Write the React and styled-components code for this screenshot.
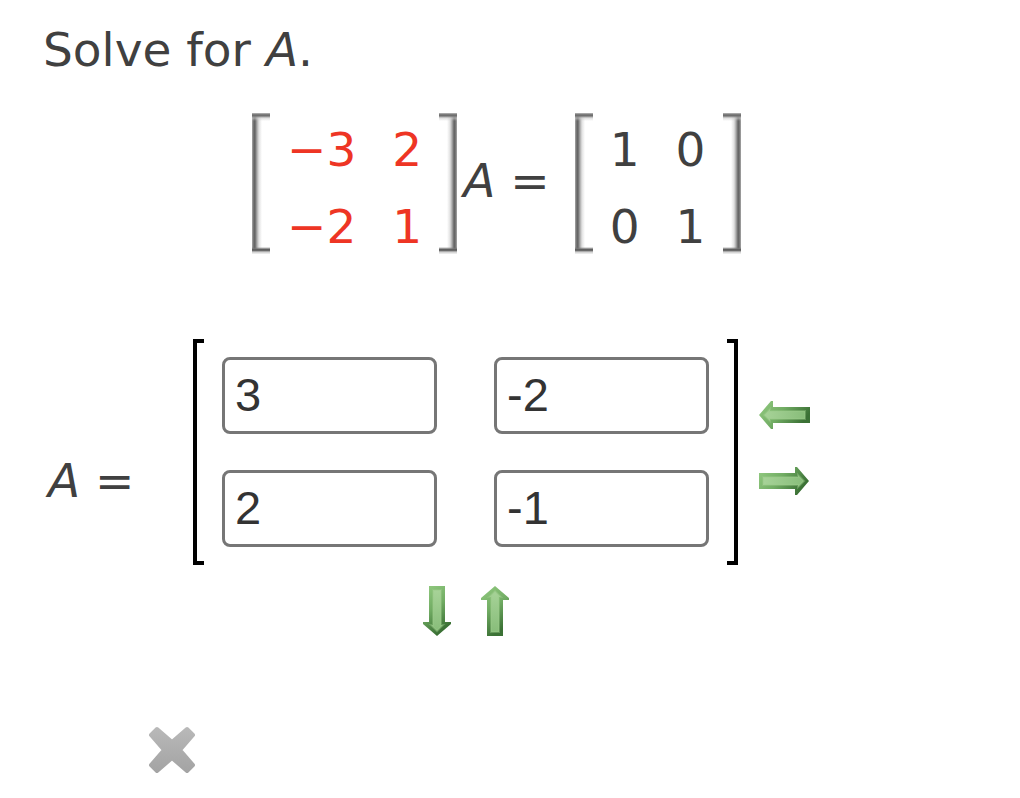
import React, { useState } from 'react'
import styled, { createGlobalStyle } from 'styled-components'

const GlobalStyle = createGlobalStyle`
  *, *::before, *::after { box-sizing: border-box; }
  body {
    margin: 0;
    background: #fff;
    color: #404040;
    font-family: Verdana, 'DejaVu Sans', sans-serif;
    font-size: 47px;
    line-height: 60px;
  }
`

const Question = styled.main`
  padding: 20px 43px;
`

const Prompt = styled.p`
  margin: 0;
`

const Equation = styled.div`
  display: flex;
  align-items: center;
  margin-top: 33px;
  padding-left: 209px;
`

const Matrix = styled.div`
  display: flex;
  color: ${props => props.$color || 'inherit'};
`

const upright = side => `linear-gradient(to ${side}, #a8a8a8, #666 2px, #666 3px, #aaa 5px, #e2e2e2 7px, rgba(255, 255, 255, 0) 10px)`

const SoftBracket = styled.span`
  width: 18px;
  height: 141px;
  background:
    linear-gradient(#bbb, #666 2px, #777 3px, rgba(200, 200, 200, 0.6) 5px, rgba(255, 255, 255, 0) 8px) left top / 100% 8px no-repeat,
    linear-gradient(to top, #f4f4f4, #ccc 2px, #484848 4px, #777 5px, rgba(255, 255, 255, 0) 7px) left bottom / 100% 7px no-repeat,
    ${props => upright(props.$side === 'left' ? 'right' : 'left')} ${props => props.$side} top / 10px 100% no-repeat;
`

const Values = styled.table`
  margin: 0 17px;
  border-collapse: collapse;

  td {
    height: 77px;
    padding: 7px 0 0;
    text-align: center;
    vertical-align: top;
  }

  td + td {
    padding-left: 36px;
  }

  tr:last-child td {
    height: 64px;
  }
`

const Operator = styled.span`
  margin: 0 25px 0 6px;
  padding-bottom: 8px;
`

const Answer = styled.form`
  display: grid;
  grid-template-columns: 150px 545px auto;
  justify-content: start;
  align-items: center;
  margin-top: 82px;
`

const Variable = styled.span`
  padding: 58px 0 0 5px;
`

const Fields = styled.div`
  display: grid;
  grid-template-columns: 1fr 1fr;
  gap: 36px 57px;
  padding: 18px 29px;
  background:
    linear-gradient(#000, #000) left top / 4px 100%,
    linear-gradient(#000, #000) left top / 11px 4px,
    linear-gradient(#000, #000) left bottom / 11px 4px,
    linear-gradient(#000, #000) right top / 4px 100%,
    linear-gradient(#000, #000) right top / 11px 4px,
    linear-gradient(#000, #000) right bottom / 11px 4px;
  background-repeat: no-repeat;
`

const Field = styled.input`
  width: 100%;
  min-width: 0;
  height: 77px;
  padding: 0 10px 2px;
  border: 3px solid #767676;
  border-radius: 8px;
  background: #fff;
  color: #333;
  font: 47px/60px Arial, 'Liberation Sans', sans-serif;
`

const Controls = styled.div`
  display: flex;
  flex-direction: ${props => (props.$row ? 'row' : 'column')};
  gap: ${props => (props.$row ? '28px' : '36px')};
  ${props => props.$row ? 'grid-column: 2; justify-content: center; padding: 20px 0 0;' : 'padding: 0 0 8px 20px;'}
`

const ArrowButton = styled.button`
  display: block;
  padding: 0;
  border: 0;
  background: none;
  cursor: pointer;

  svg { display: block; }
`

const Result = styled.div`
  margin: 88px 0 0 104px;

  svg { display: block; }
`

const shapes = {
  left: 'M1 15 L13 1 H15 V7 H52 V23 H15 V29 H13 Z',
  right: 'M51 15 L39 1 H37 V7 H1 V23 H37 V29 H39 Z',
  down: 'M15 51 L1 39 V37 H7 V1 H23 V37 H29 V39 Z',
  up: 'M15 1 L1 13 V15 H7 V51 H23 V15 H29 V13 Z',
}

const insides = {
  left: 'M6 15 L12 9 V11 H47 V19 H12 V21 Z',
  right: 'M46 15 L40 9 V11 H5 V19 H40 V21 Z',
  down: 'M15 46 L9 40 H11 V5 H19 V40 H21 Z',
  up: 'M15 6 L9 12 H11 V47 H19 V12 H21 Z',
}

const Arrow = ({ id, dir, label }) => {
  const wide = dir === 'left' || dir === 'right'

  return (
    <ArrowButton type="button" aria-label={label}>
      <svg width={wide ? 52 : 30} height={wide ? 30 : 52}>
        <defs>
          <linearGradient id={id} x1="0" y1="0" x2={wide ? '1' : '0.4'} y2={wide ? '0.4' : '1'}>
            <stop offset="0" stopColor="#94cc82" />
            <stop offset="0.5" stopColor="#72ad64" />
            <stop offset="1" stopColor="#3b7135" />
          </linearGradient>
          <linearGradient id={id + '-in'} x1="0" y1="0" x2={wide ? '1' : '0'} y2={wide ? '0' : '1'}>
            <stop offset="0" stopColor="#a7d398" />
            <stop offset="1" stopColor="#88bd7a" />
          </linearGradient>
        </defs>
        <path d={shapes[dir]} fill={`url(#${id})`} />
        <path d={insides[dir]} fill={`url(#${id}-in)`} stroke="#9acb8a" strokeOpacity="0.4" strokeWidth="2" />
      </svg>
    </ArrowButton>
  )
}

const KnownMatrix = ({ rows, color }) => (
  <Matrix $color={color}>
    <SoftBracket $side="left" />
    <Values>
      <tbody>
        {rows.map((row, i) => (
          <tr key={i}>{row.map((value, j) => <td key={j}>{value}</td>)}</tr>
        ))}
      </tbody>
    </Values>
    <SoftBracket $side="right" />
  </Matrix>
)

const App = () => {
  const [entries, setEntries] = useState(['3', '-2', '2', '-1'])

  const update = (index, value) => {
    setEntries(entries.map((entry, i) => (i === index ? value : entry)))
  }

  return (
    <Question>
      <GlobalStyle />
      <Prompt>Solve for <i>A</i>.</Prompt>

      <Equation>
        <KnownMatrix color="#ee3524" rows={[['−3', '2'], ['−2', '1']]} />
        <Operator><i>A</i> =</Operator>
        <KnownMatrix rows={[['1', '0'], ['0', '1']]} />
      </Equation>

      <Answer onSubmit={e => e.preventDefault()}>
        <Variable><i>A</i> =</Variable>
        <Fields>
          {entries.map((entry, i) => (
            <Field
              key={i}
              type="text"
              aria-label={`Row ${Math.floor(i / 2) + 1}, column ${(i % 2) + 1}`}
              value={entry}
              onChange={e => update(i, e.target.value)}
            />
          ))}
        </Fields>
        <Controls>
          <Arrow id="remove-column" dir="left" label="Remove column" />
          <Arrow id="add-column" dir="right" label="Add column" />
        </Controls>
        <Controls $row>
          <Arrow id="add-row" dir="down" label="Add row" />
          <Arrow id="remove-row" dir="up" label="Remove row" />
        </Controls>
      </Answer>

      <Result>
        <svg width="50" height="50" role="img" aria-label="Incorrect">
          <defs>
            <linearGradient id="cross" x1="0" y1="0" x2="0" y2="1">
              <stop offset="0" stopColor="#b8b8b8" />
              <stop offset="1" stopColor="#a4a4a4" />
            </linearGradient>
          </defs>
          <path
            d="M10 4 L25 17 L40 4 L46 10 L33 25 L46 40 L40 46 L25 33 L10 46 L4 40 L17 25 L4 10 Z"
            fill="url(#cross)"
            stroke="url(#cross)"
            strokeWidth="4"
            strokeLinejoin="round"
          />
        </svg>
      </Result>
    </Question>
  )
}

export default App
